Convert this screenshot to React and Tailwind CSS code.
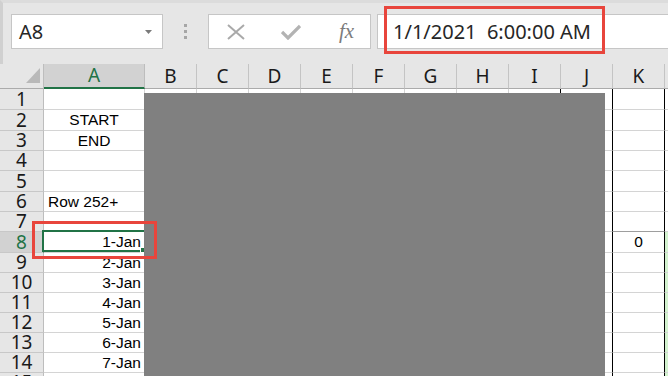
import React from "react";

const COLS = [
  { k: "A", w: 101 },
  { k: "B", w: 52 },
  { k: "C", w: 52 },
  { k: "D", w: 52 },
  { k: "E", w: 52 },
  { k: "F", w: 52 },
  { k: "G", w: 52 },
  { k: "H", w: 52 },
  { k: "I", w: 52 },
  { k: "J", w: 52 },
  { k: "K", w: 52 },
  { k: "L", w: 4 },
];

const ROW_H = [21, 21, 20, 20, 21, 20, 20, 21, 20, 20, 20, 20, 20, 20, 20];

const A_TEXT = {
  2: { t: "START", a: "center" },
  3: { t: "END", a: "center" },
  6: { t: "Row 252+", a: "left" },
  8: { t: "1-Jan", a: "right" },
  9: { t: "2-Jan", a: "right" },
  10: { t: "3-Jan", a: "right" },
  11: { t: "4-Jan", a: "right" },
  12: { t: "5-Jan", a: "right" },
  13: { t: "6-Jan", a: "right" },
  14: { t: "7-Jan", a: "right" },
};

const HDR_FONT = { fontFamily: '"Noto Sans", "Open Sans", sans-serif' };
const CELL_FONT = { fontFamily: '"Liberation Sans", Arial, sans-serif' };

function Cell({ col, row, h }) {
  let border = "border-r border-b border-r-[#d4d4d4] border-b-[#d4d4d4]";
  if (col.k === "I" || col.k === "J" || col.k === "K") {
    border = "border-r border-b border-r-black border-b-[#d4d4d4]";
  }
  if (col.k === "K" && row === 7) {
    border = "border-r border-b border-r-black border-b-[#9e9e9e]";
  }
  let bg = "bg-white";
  if (col.k === "L" && row >= 8) bg = "bg-[#d3f2cf]";
  if (col.k === "L") border = "border-b border-b-[#d4d4d4]";
  let content = null;
  let justify = "justify-center";
  if (col.k === "A" && A_TEXT[row]) {
    const d = A_TEXT[row];
    content = d.t;
    justify =
      d.a === "left" ? "justify-start pl-[4px]" : d.a === "right" ? "justify-end pr-[3px]" : "justify-center";
  }
  if (col.k === "K" && row === 8) content = "0";
  return (
    <div
      className={`shrink-0 flex items-center ${justify} ${border} ${bg} text-[15.5px] text-black whitespace-nowrap overflow-hidden`}
      style={{ width: col.w, height: h, lineHeight: `${h - 1}px`, ...CELL_FONT }}
    >
      {content}
    </div>
  );
}

function Toolbar() {
  return (
    <div className="h-[64px] bg-[#e6e6e6] border-l-[3px] border-l-[#d0d0d0] border-t-[3px] border-t-[#dcdcdc] flex items-start pt-[11px] pl-[8px]">
      {/* Name box */}
      <div
        className="w-[152px] h-[35px] shrink-0 bg-white border border-[#c6c6c6] flex items-center pl-[7px] pr-[10px] justify-between"
        style={HDR_FONT}
      >
        <span className="text-[20px] text-[#262626] leading-none">A8</span>
        <svg width="7" height="4" viewBox="0 0 7 4">
          <path d="M0 0 L7 0 L3.5 4 Z" fill="#7a7a7a" />
        </svg>
      </div>
      {/* dots */}
      <div className="w-[45px] h-[35px] shrink-0 flex flex-col items-center justify-center gap-[3px]">
        <div className="w-[3px] h-[3px] bg-[#a6a6a6]" />
        <div className="w-[3px] h-[3px] bg-[#a6a6a6]" />
        <div className="w-[3px] h-[3px] bg-[#a6a6a6]" />
      </div>
      {/* buttons */}
      <div className="w-[163px] h-[35px] shrink-0 bg-white border border-[#c6c6c6] flex items-center">
        <svg width="18" height="16" viewBox="0 0 18 16" className="ml-[18px]">
          <path d="M1 1 L17 15 M17 1 L1 15" stroke="#a9a9a9" strokeWidth="2" fill="none" />
        </svg>
        <svg width="20" height="16" viewBox="0 0 20 16" className="ml-[36px]">
          <path d="M1 8 L7 14 L19 2" stroke="#b3b3b3" strokeWidth="3.2" fill="none" />
        </svg>
        <span
          className="ml-[38px] text-[21px] italic text-[#7c7c7c] leading-none"
          style={{ fontFamily: '"Liberation Serif", "Times New Roman", serif' }}
        >
          fx
        </span>
      </div>
      {/* formula */}
      <div
        className="ml-[6px] w-[300px] h-[35px] shrink-0 bg-white border border-[#c6c6c6] flex items-center pl-[15px]"
        style={HDR_FONT}
      >
        <span className="text-[20px] text-[#262626] leading-none whitespace-pre">1/1/2021  6:00:00 AM</span>
      </div>
    </div>
  );
}

function HeaderRow() {
  return (
    <div className="flex h-[25px]">
      <div className="w-[44px] shrink-0 h-[25px] bg-[#e6e6e6] border-r border-b border-r-[#bdbdbd] border-b-[#ababab] relative">
        <svg width="44" height="24" viewBox="0 0 44 24" className="absolute left-0 top-0">
          <path d="M40 4 L40 19 L26 19 Z" fill="#b9b9b9" />
        </svg>
      </div>
      {COLS.map((c) => {
        const active = c.k === "A";
        return (
          <div
            key={c.k}
            className={`shrink-0 h-[25px] flex items-center justify-center text-[19px] leading-none ${
              active
                ? "bg-[#d2d2d2] text-[#217346] border-r border-r-[#bdbdbd] border-b-2 border-b-[#217346]"
                : "bg-[#e6e6e6] text-[#1a1a1a] border-r border-b border-r-[#c4c4c4] border-b-[#ababab]"
            }`}
            style={{ width: c.w, ...HDR_FONT }}
          >
            {c.k === "L" ? "" : c.k}
          </div>
        );
      })}
    </div>
  );
}

export default function App() {
  return (
    <div className="w-[668px] h-[376px] overflow-hidden relative bg-white">
      <Toolbar />
      <HeaderRow />
      {ROW_H.map((h, i) => {
        const row = i + 1;
        const active = row === 8;
        return (
          <div key={row} className="flex">
            <div
              className={`w-[44px] shrink-0 flex items-center justify-center text-[19px] border-r border-b border-b-[#c8c8c8] overflow-hidden ${
                active ? "bg-[#d2d2d2] text-[#217346] border-r-[#217346]" : "bg-[#e6e6e6] text-[#1a1a1a] border-r-[#bdbdbd]"
              }`}
              style={{ height: h, lineHeight: `${h - 1}px`, ...HDR_FONT }}
            >
              {row}
            </div>
            {COLS.map((c) => (
              <Cell key={c.k} col={c} row={row} h={h} />
            ))}
          </div>
        );
      })}

      {/* Selection for A8 */}
      <div className="absolute left-[42px] top-[230px] w-[103px] h-[22px] border-t-2 border-l-2 border-b-2 border-[#217346]" />
      <div className="absolute left-[140px] top-[247px] w-[6px] h-[6px] bg-[#217346] border border-white" />

      {/* Gray shape overlay */}
      <div className="absolute left-[144px] top-[93px] w-[461px] h-[283px] bg-[#808080]" />

      {/* Red annotation boxes */}
      <div className="absolute left-[32px] top-[221px] w-[125px] h-[38px] border-[3px] border-[#e8453c]" />
      <div className="absolute left-[384px] top-[6px] w-[221px] h-[48px] border-[3px] border-[#e8453c]" />
    </div>
  );
}
